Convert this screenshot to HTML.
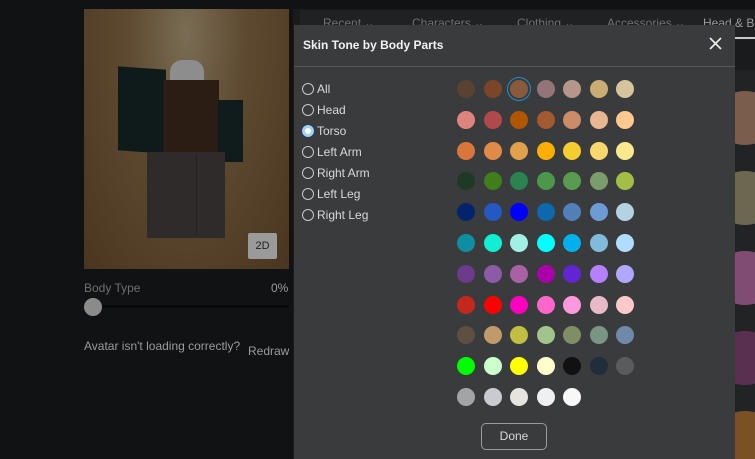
<!DOCTYPE html>
<html style="width:755px;height:459px;overflow:hidden"><head><style>
*{margin:0;padding:0;box-sizing:border-box}
body{width:755px;height:459px;overflow:hidden;background:#111214;font-family:"Liberation Sans",sans-serif;position:relative}
.abs{position:absolute}
.sw{position:absolute;width:18px;height:18px;border-radius:50%}
.rb{position:absolute;left:302px;font-size:12px;color:#d8d9da}
.rb i{position:absolute;left:0;top:1px;width:12px;height:12px;border:1px solid #c8c8c8;border-radius:50%}
.rb span{position:absolute;left:15px;top:0;white-space:nowrap}
</style></head><body>
<div class="abs" style="left:84px;top:9px;width:205px;height:260px;background:radial-gradient(ellipse at 50% 10%,#7a6d55 0%,#5e4a31 40%,#4a3520 100%)"></div>
<div class="abs" style="left:170px;top:60px;width:34px;height:32px;background:#8d8d8d;border-radius:12px 12px 2px 2px"></div>
<div class="abs" style="left:118px;top:68px;width:48px;height:84px;background:#0f1a1a;transform:skewY(4deg)"></div>
<div class="abs" style="left:163px;top:80px;width:56px;height:75px;background:#2b1d14"></div>
<div class="abs" style="left:218px;top:100px;width:25px;height:62px;background:#101b1b"></div>
<div class="abs" style="left:147px;top:152px;width:78px;height:86px;background:#2e2b2a"></div>
<div class="abs" style="left:196px;top:155px;width:1px;height:80px;background:#222"></div>
<div class="abs" style="left:248px;top:233px;width:29px;height:26px;background:#9a9a9a;border-radius:2px;font-size:11px;color:#222;text-align:center;line-height:26px">2D</div>
<div class="abs" style="left:84px;top:281px;font-size:12px;color:#6e6f71">Body Type</div>
<div class="abs" style="left:271px;top:281px;font-size:12px;color:#9a9b9c">0%</div>
<div class="abs" style="left:90px;top:305px;width:199px;height:3px;background:#0a0a0b"></div>
<div class="abs" style="left:84px;top:298px;width:18px;height:18px;border-radius:50%;background:#8b8b8b"></div>
<div class="abs" style="left:84px;top:339px;font-size:12px;color:#9a9b9c">Avatar isn't loading correctly?</div>
<div class="abs" style="left:248px;top:344px;font-size:12px;color:#9a9b9c">Redraw</div>
<div class="abs" style="left:293px;top:9px;width:462px;height:450px;background:#1a1b1d"></div>
<div class="abs" style="left:300px;top:10px;width:455px;height:30px;background:#202123"></div>
<div class="abs" style="left:323px;top:16px;font-size:12px;color:#707173;white-space:nowrap">Recent ⌄</div>
<div class="abs" style="left:412px;top:16px;font-size:12px;color:#707173;white-space:nowrap">Characters ⌄</div>
<div class="abs" style="left:517px;top:16px;font-size:12px;color:#707173;white-space:nowrap">Clothing ⌄</div>
<div class="abs" style="left:607px;top:16px;font-size:12px;color:#707173;white-space:nowrap">Accessories ⌄</div>
<div class="abs" style="left:703px;top:16px;font-size:12px;color:#9a9a9a;white-space:nowrap">Head &amp; Bo</div>
<div class="abs" style="left:735px;top:37px;width:20px;height:2px;background:#c8c8c8"></div>
<div class="abs" style="left:735px;top:70px;width:20px;height:389px;background:#222325"></div>
<div class="abs" style="left:715px;top:91px;width:60px;height:54px;border-radius:50%;background:#7a5d4c"></div>
<div class="abs" style="left:715px;top:171px;width:60px;height:54px;border-radius:50%;background:#6c6750"></div>
<div class="abs" style="left:715px;top:251px;width:60px;height:54px;border-radius:50%;background:#7f4c74"></div>
<div class="abs" style="left:715px;top:331px;width:60px;height:54px;border-radius:50%;background:#5a3050"></div>
<div class="abs" style="left:715px;top:411px;width:60px;height:54px;border-radius:50%;background:#7a5124"></div>
<div class="abs" style="left:294px;top:25px;width:441px;height:434px;background:#393b3d"></div>
<div class="abs" style="left:294px;top:66px;width:441px;height:1px;background:#56585a"></div>
<div class="abs" style="left:303px;top:38px;font-size:12px;font-weight:bold;color:#f2f2f2">Skin Tone by Body Parts</div>
<svg class="abs" style="left:709px;top:37px" width="13" height="13"><path d="M1 1L12 12M12 1L1 12" stroke="#eee" stroke-width="1.6"/></svg>
<div class="rb" style="top:82px"><i></i><span>All</span></div>
<div class="rb" style="top:103px"><i></i><span>Head</span></div>
<div class="rb" style="top:124px"><i style="border:3px solid #9fd3f5;background:#fff;box-shadow:0 0 0 1px #335"></i><span>Torso</span></div>
<div class="rb" style="top:145px"><i></i><span>Left Arm</span></div>
<div class="rb" style="top:166px"><i></i><span>Right Arm</span></div>
<div class="rb" style="top:187px"><i></i><span>Left Leg</span></div>
<div class="rb" style="top:208px"><i></i><span>Right Leg</span></div>
<div id="g"></div>
<div class="abs" style="left:507px;top:77px;width:24px;height:24px;border-radius:50%;border:1.5px solid #1f8fd6"></div>
<div class="abs" style="left:481px;top:423px;width:66px;height:27px;border:1px solid #9a9b9c;border-radius:5px;font-size:12px;color:#d8d9da;text-align:center;line-height:25px">Done</div>
<script>
var c=[
["#5a4132","#7a4528","#8a5a3c","#957478","#b6968a","#c9ad74","#d6c59c"],
["#dd857a","#b04a4a","#b05600","#a35a30","#cc8c68","#e8b690","#fdc98e"],
["#d9763c","#df8a47","#e3a04a","#ffae00","#f5cd30","#f8d86c","#fde98d"],
["#1f3a24","#3f7e1a","#2a8450","#4b974b","#5a9b50","#7b9c6b","#a4bd47"],
["#03246b","#2458c2","#0000ff","#0d69ac","#5180b8","#6d9bd3","#b4d2e4"],
["#0e8ea0","#12eed4","#a0f0e6","#00ffff","#00b0ec","#80bbdb","#b0dcff"],
["#6d3b8c","#8c5ba8","#a862a4","#aa00aa","#6225d1","#b480ff","#b1a7ff"],
["#c4281c","#ff0000","#ff00bf","#ff66cc","#ff98dc","#e8bac8","#ffc9c9"],
["#5f4f42","#c09a6a","#c1be42","#a1c48c","#7f8e64","#7a9584","#7189a8"],
["#00ff00","#ccffcc","#ffff00","#ffffcc","#111111","#1f2e3a","#5a5b5d"],
["#a3a4a5","#cacbd1","#e5e4df","#f0f0f0","#f8f8f8"]];
var h="";c.forEach(function(r,i){r.forEach(function(col,j){h+='<div class="sw" style="left:'+(457+j*26.5)+'px;top:'+(80+i*30.8)+'px;background:'+col+'"></div>'})});
document.getElementById("g").innerHTML=h;
</script>
</body></html>
